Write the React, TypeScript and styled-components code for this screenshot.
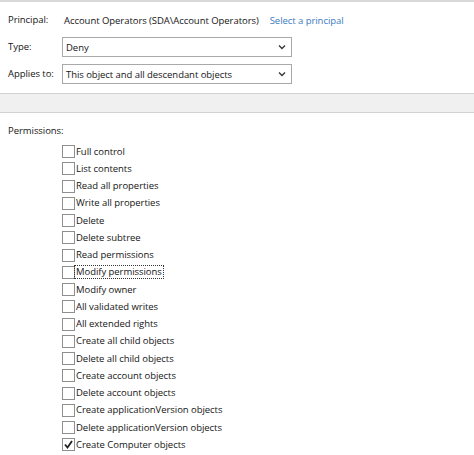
import React from 'react'
import styled, { createGlobalStyle } from 'styled-components'

const GlobalStyle = createGlobalStyle`
  html, body {
    margin: 0;
    padding: 0;
    background: #ffffff;
  }
  body {
    font-family: 'Open Sans', 'Noto Sans', sans-serif;
    font-size: 9.5px;
    letter-spacing: -0.05px;
    color: #151515;
  }
`

const Page = styled.div`
  width: 474px;
  height: 455px;
  border-top: 2px solid #d9d9d9;
  box-sizing: border-box;
  overflow: hidden;
`

const Header = styled.div`
  display: grid;
  grid-template-columns: 54px 1fr;
  grid-auto-rows: 20px;
  row-gap: 7px;
  align-items: center;
  padding: 8px 0 0 8px;
`

const Label = styled.div`
  line-height: 20px;
  white-space: nowrap;
`

const PrincipalValue = styled.div`
  display: flex;
  align-items: center;
  gap: 11px;
  padding-left: 2px;
  white-space: nowrap;
`

const Link = styled.a`
  color: #3a7bbf;
  text-decoration: none;
  cursor: pointer;
`

const Select = styled.div`
  width: 230px;
  height: 20px;
  box-sizing: border-box;
  border: 1px solid #a9a9a9;
  display: flex;
  align-items: center;
  justify-content: space-between;
  padding: 0 5px 0 3px;
  background: #fff;
`

const Band = styled.div`
  margin-top: 9px;
  height: 20px;
  box-sizing: border-box;
  background: #f0f0f0;
  border-top: 1px solid #d2d2d2;
  border-bottom: 1px solid #d2d2d2;
`

const Section = styled.div`
  padding: 9px 0 0 8px;
`

const SectionTitle = styled.div`
  line-height: 18px;
`

const List = styled.div`
  display: flex;
  flex-direction: column;
  margin-top: 3px;
  padding-left: 54px;
`

const Row = styled.label`
  display: flex;
  align-items: center;
  height: 17.25px;
`

const Box = styled.span`
  width: 13px;
  height: 13px;
  box-sizing: border-box;
  border: 1px solid #8f8f8f;
  background: #fff;
  display: flex;
  align-items: center;
  justify-content: center;
  flex-shrink: 0;
`

const Text = styled.span<{ $focused?: boolean }>`
  padding: 0 1px;
  line-height: 12px;
  white-space: nowrap;
  outline: ${(p) => (p.$focused ? '1px dotted #333' : 'none')};
`

const Chevron = () => (
  <svg width="8" height="6" viewBox="0 0 8 6">
    <polyline points="1,1.5 4,4.5 7,1.5" fill="none" stroke="#333" strokeWidth="1.3" />
  </svg>
)

const Check = () => (
  <svg width="11" height="11" viewBox="0 0 11 11">
    <polyline points="2,5.5 4.5,8.5 9,2" fill="none" stroke="#222" strokeWidth="1.8" />
  </svg>
)

const permissions = [
  'Full control',
  'List contents',
  'Read all properties',
  'Write all properties',
  'Delete',
  'Delete subtree',
  'Read permissions',
  'Modify permissions',
  'Modify owner',
  'All validated writes',
  'All extended rights',
  'Create all child objects',
  'Delete all child objects',
  'Create account objects',
  'Delete account objects',
  'Create applicationVersion objects',
  'Delete applicationVersion objects',
  'Create Computer objects',
]

const App: React.FC = () => (
  <>
    <GlobalStyle />
    <Page>
      <Header>
        <Label>Principal:</Label>
        <PrincipalValue>
          <span>Account Operators (SDA\Account Operators)</span>
          <Link>Select a principal</Link>
        </PrincipalValue>
        <Label>Type:</Label>
        <Select>
          <span>Deny</span>
          <Chevron />
        </Select>
        <Label>Applies to:</Label>
        <Select>
          <span>This object and all descendant objects</span>
          <Chevron />
        </Select>
      </Header>
      <Band />
      <Section>
        <SectionTitle>Permissions:</SectionTitle>
        <List>
          {permissions.map((name) => (
            <Row key={name}>
              <Box>{name === 'Create Computer objects' && <Check />}</Box>
              <Text $focused={name === 'Modify permissions'}>{name}</Text>
            </Row>
          ))}
        </List>
      </Section>
    </Page>
  </>
)

export default App
